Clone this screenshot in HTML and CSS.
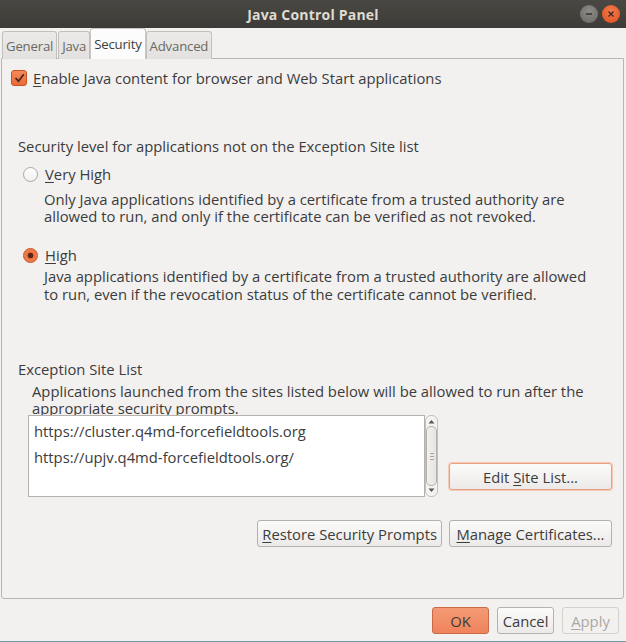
FILE: index.html
```html
<!DOCTYPE html>
<html lang="en">
<head>
    <meta charset="UTF-8">
    <meta name="viewport" content="width=device-width, initial-scale=1.0">
    <title>Java Control Panel</title>
    <link rel="stylesheet" href="styles.css">
</head>
<body>
    <div class="window">
        <header class="titlebar">
            <span></span>
            <h1>Java Control Panel</h1>
            <div class="controls">
                <span class="ctl ctl-min"><svg width="8" height="8" viewBox="0 0 8 8"><path d="M1 4h6" stroke="#3a3935" stroke-width="1.6"/></svg></span>
                <span class="ctl ctl-close"><svg width="8" height="8" viewBox="0 0 8 8"><path d="M1.5 1.5l5 5M6.5 1.5l-5 5" stroke="#3a2a20" stroke-width="1.4"/></svg></span>
            </div>
        </header>

        <nav class="tabs">
            <a href="#" class="tab">General</a>
            <a href="#" class="tab">Java</a>
            <a href="#" class="tab active">Security</a>
            <a href="#" class="tab">Advanced</a>
        </nav>

        <div class="panel">
            <label class="check-row">
                <span class="checkbox"><svg width="11" height="10" viewBox="0 0 11 10"><path d="M1.5 5l3 3.2L9.8 1.2" fill="none" stroke="#4a2618" stroke-width="1.8"/></svg></span>
                <span><u>E</u>nable Java content for browser and Web Start applications</span>
            </label>

            <div class="level">
                <div class="section-title">Security level for applications not on the Exception Site list</div>

                <div class="option">
                    <div class="radio-row"><span class="radio"></span><span><u>V</u>ery High</span></div>
                    <p class="desc">Only Java applications identified by a certificate from a trusted authority are<br>allowed to run, and only if the certificate can be verified as not revoked.</p>
                </div>

                <div class="option option-high">
                    <div class="radio-row"><span class="radio checked"></span><span><u>H</u>igh</span></div>
                    <p class="desc">Java applications identified by a certificate from a trusted authority are allowed<br>to run, even if the revocation status of the certificate cannot be verified.</p>
                </div>
            </div>

            <div class="exceptions">
                <div class="section-title">Exception Site List</div>
                <p class="ex-desc">Applications launched from the sites listed below will be allowed to run after the<br>appropriate security prompts.</p>
                <div class="list-row">
                    <div class="site-list">
                        <ul>
                            <li>https://cluster.q4md-forcefieldtools.org</li>
                            <li>https://upjv.q4md-forcefieldtools.org/</li>
                        </ul>
                        <div class="scrollbar">
                            <svg class="arrow" width="7" height="5" viewBox="0 0 7 5"><path d="M0.5 4.5L3.5 1 6.5 4.5z" fill="#555"/></svg>
                            <div class="thumb"><span></span><span></span><span></span></div>
                            <svg class="arrow" width="7" height="5" viewBox="0 0 7 5"><path d="M0.5 0.5L3.5 4 6.5 0.5z" fill="#555"/></svg>
                        </div>
                    </div>
                    <button class="btn btn-edit">Edit <u>S</u>ite List...</button>
                </div>
            </div>

            <div class="panel-actions">
                <button class="btn btn-restore"><u>R</u>estore Security Prompts</button>
                <button class="btn btn-manage"><u>M</u>anage Certificates...</button>
            </div>
        </div>

        <footer class="dialog-actions">
            <button class="btn btn-ok">OK</button>
            <button class="btn btn-cancel">Cancel</button>
            <button class="btn btn-apply" disabled><u>A</u>pply</button>
        </footer>
    </div>
</body>
</html>
```

FILE: styles.css
```css
body {
    margin: 0;
    padding: 0;
    background-color: #f2f1f0;
    font-family: "Open Sans", "Noto Sans", sans-serif;
    font-size: 14.8px;
    color: #3c3c3c;
}
.window {
    width: 626px;
    height: 641px;
    border-bottom: 1px solid #6f9aa6;
    display: flex;
    flex-direction: column;
    overflow: hidden;
}
u {
    text-decoration-thickness: 1px;
    text-underline-offset: 2px;
}

/* title bar */
.titlebar {
    height: 28px;
    background: linear-gradient(#4a4843, #3c3b37);
    display: grid;
    grid-template-columns: 1fr auto 1fr;
    align-items: center;
}
.titlebar h1 {
    margin: 0;
    font-size: 14px;
    font-weight: bold;
    color: #dfdbd2;
    letter-spacing: 0.2px;
}
.controls {
    display: flex;
    justify-content: flex-end;
    gap: 4px;
    padding-right: 6px;
}
.ctl {
    width: 18px;
    height: 18px;
    border-radius: 50%;
    display: flex;
    align-items: center;
    justify-content: center;
}
.ctl-min {
    background: radial-gradient(circle at 50% 35%, #8d8b86, #6a6864);
}
.ctl-close {
    background: radial-gradient(circle at 50% 35%, #f47a4c, #df4e1b);
}

/* tabs */
.tabs {
    display: flex;
    align-items: flex-end;
    height: 31px;
    padding-left: 1px;
    margin-bottom: -1px;
    position: relative;
    z-index: 1;
}
.tab {
    height: 27px;
    line-height: 29px;
    padding: 0 3px;
    margin-left: 1px;
    font-size: 13.2px;
    letter-spacing: -0.2px;
    color: #6b6963;
    text-decoration: none;
    background: linear-gradient(#ebeae8, #e2e1df);
    border: 1px solid #c3c0bb;
    border-bottom: none;
    border-radius: 3px 3px 0 0;
}
.tab.active,
.tab.active + .tab {
    margin-left: 0;
}
.tab.active {
    height: 30px;
    line-height: 31px;
    background: #fcfcfc;
    color: #3c3c3c;
    border-color: #c9c6c1;
}

/* main panel */
.panel {
    height: 539px;
    margin: 0 2px 0 1px;
    border: 1px solid #b9b6b1;
    border-radius: 0 0 3px 3px;
    padding: 0 0 0 9px;
}
.check-row {
    display: flex;
    align-items: center;
    gap: 6px;
    margin-top: 9px;
}
.checkbox {
    width: 14px;
    height: 14px;
    border: 1px solid #c4531e;
    border-radius: 3px;
    background: linear-gradient(#f58a5e, #ea6a36);
    display: flex;
    align-items: center;
    justify-content: center;
}
.level {
    margin-top: 48px;
    padding-left: 7px;
}
.option {
    margin-top: 8px;
    padding-left: 5px;
}
.option-high {
    margin-top: 20px;
}
.radio-row {
    display: flex;
    align-items: center;
    gap: 7px;
}
.radio {
    width: 13px;
    height: 13px;
    border: 1px solid #a9a6a1;
    border-radius: 50%;
    background: linear-gradient(#ffffff, #f1f0ee);
}
.radio.checked {
    border-color: #c4531e;
    background: radial-gradient(circle, #5a2616 0, #5a2616 2.5px, #ee7040 3.2px, #f28a5f 100%);
}
.desc {
    margin: 7px 0 0 21px;
    line-height: 17px;
}
.option-high .desc {
    margin-top: 2px;
    line-height: 18px;
}
.exceptions {
    margin-top: 56px;
    padding-left: 7px;
}
.ex-desc {
    margin: 4px 0 0 14px;
    line-height: 17px;
}
.list-row {
    display: flex;
    align-items: flex-end;
    margin: -2px 0 0 10px;
    gap: 11px;
}
.site-list {
    display: flex;
    height: 82px;
}
.site-list ul {
    list-style: none;
    margin: 0;
    padding: 3px 5px;
    width: 385px;
    background: #fff;
    border: 1px solid #b5b2ad;
}
.site-list li {
    height: 26px;
    line-height: 24px;
}
.scrollbar {
    width: 11px;
    border: 1px solid #c3c0bb;
    border-radius: 6px;
    background: #f4f3f1;
    display: flex;
    flex-direction: column;
    align-items: center;
    justify-content: space-between;
    padding: 3px 0;
}
.scrollbar .thumb {
    width: 9px;
    flex: 1;
    margin: 2px 0;
    border: 1px solid #b4b1ac;
    border-radius: 5px;
    background: linear-gradient(90deg, #f2f1ef, #e6e4e1);
    display: flex;
    flex-direction: column;
    align-items: center;
    justify-content: center;
    gap: 2px;
}
.thumb span {
    width: 4px;
    height: 1px;
    background: #a9a6a1;
}

/* buttons */
.btn {
    font-family: inherit;
    font-size: 14.8px;
    color: #3c3c3c;
    height: 27px;
    padding: 0 4px;
    border: 1px solid #b5b2ad;
    border-radius: 3px;
    background: linear-gradient(#fbfbfa, #eceae8);
}
.btn-edit {
    width: 163px;
    margin-bottom: 7px;
    border-color: #e8a083;
    box-shadow: 0 0 0 1px #f6c8b4;
}
.panel-actions {
    display: flex;
    justify-content: flex-end;
    gap: 7px;
    margin-top: 23px;
    padding-right: 11px;
}
.btn-manage {
    width: 163px;
}
.dialog-actions {
    display: flex;
    justify-content: flex-end;
    gap: 8px;
    padding: 8px 7px 0 0;
}
.dialog-actions .btn {
    width: 57px;
}
.btn-ok {
    background: linear-gradient(#f49a74, #ef835c);
    border-color: #c96b47;
}
.btn-apply {
    color: #aaa8a4;
    border-color: #d3d1cd;
    background: #f2f1f0;
}
```
